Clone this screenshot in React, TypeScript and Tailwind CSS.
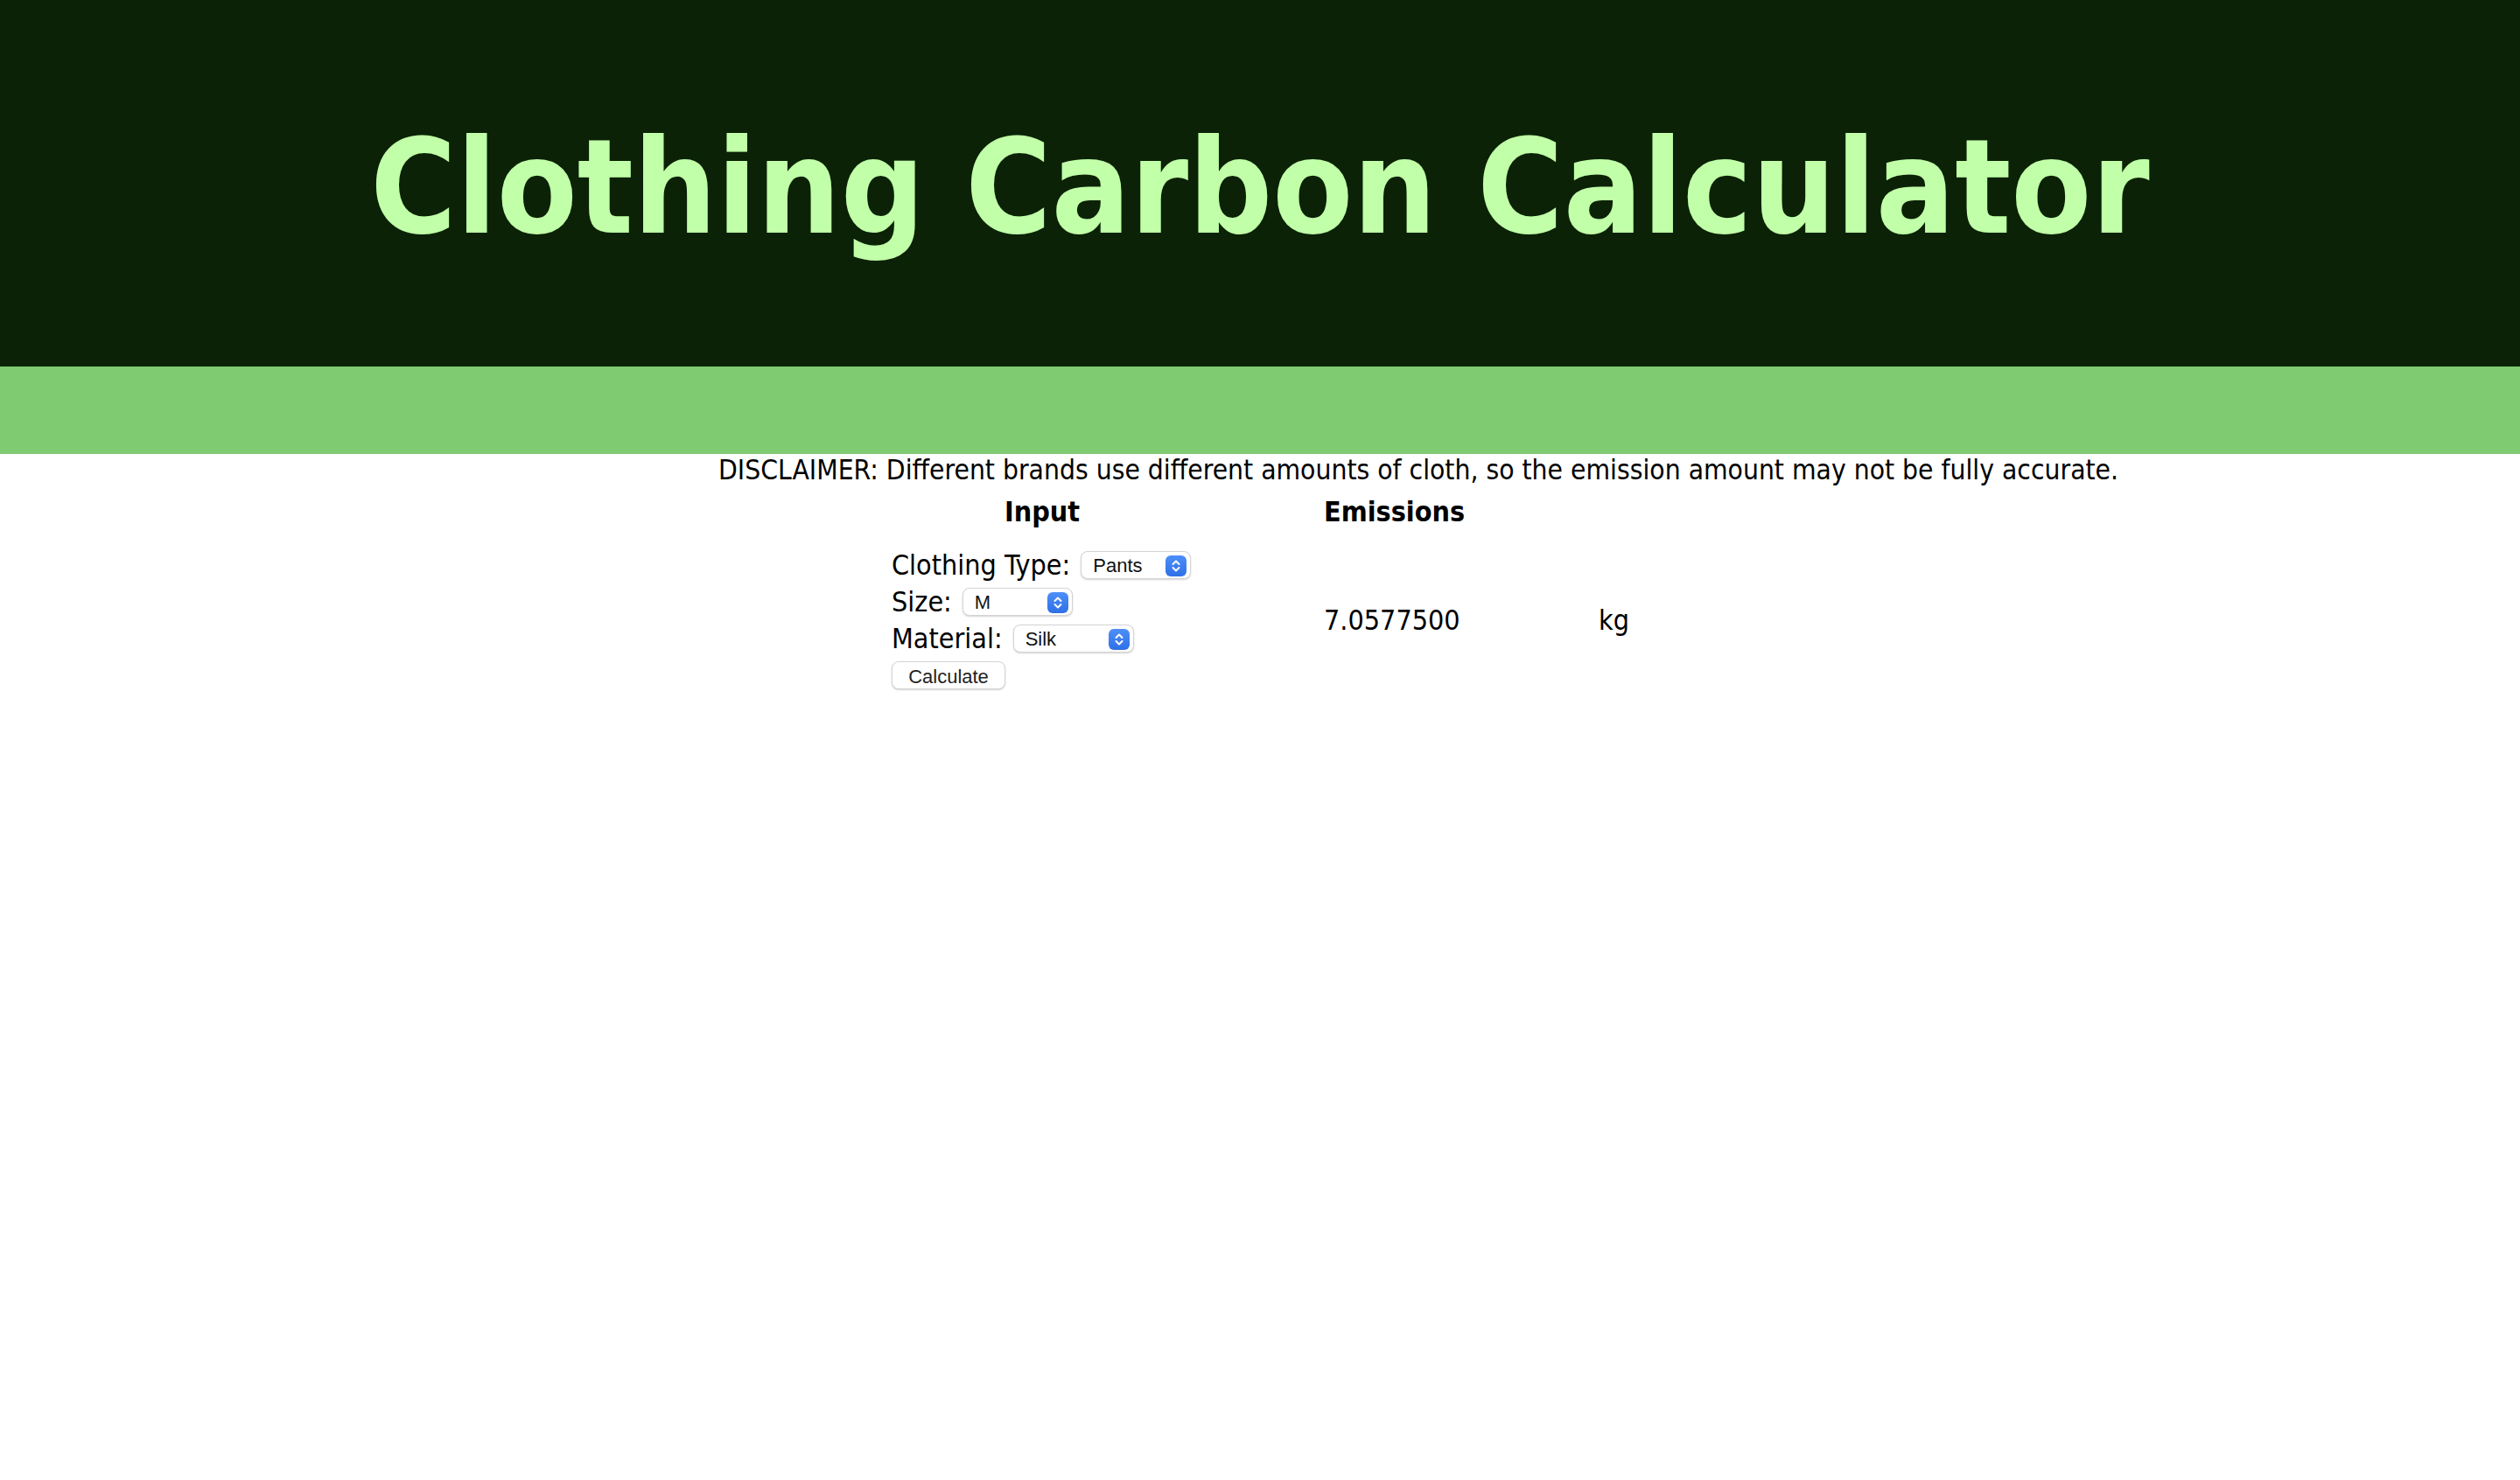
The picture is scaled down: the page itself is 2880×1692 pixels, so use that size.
import React from "react";

function Stepper() {
  return (
    <span className="absolute right-[4px] top-[4px] flex h-[24px] w-[24px] items-center justify-center rounded-[6px] bg-gradient-to-b from-[#4d8ff8] to-[#2f6fe8]">
      <svg width="14" height="18" viewBox="0 0 14 18" fill="none">
        <path d="M3.5 7 L7 3.5 L10.5 7" stroke="white" strokeWidth="2" strokeLinecap="round" strokeLinejoin="round" />
        <path d="M3.5 11 L7 14.5 L10.5 11" stroke="white" strokeWidth="2" strokeLinecap="round" strokeLinejoin="round" />
      </svg>
    </span>
  );
}

function FakeSelect({ value, width }: { value: string; width: string }) {
  return (
    <div className={`relative h-[32px] ${width} rounded-[8px] border border-[#d4d4d4] bg-white shadow-[0_1px_2px_rgba(0,0,0,0.18)]`}>
      <span className="absolute left-[13px] top-0 flex h-full items-center font-['Liberation_Sans',sans-serif] text-[22px] text-[#111]">
        {value}
      </span>
      <Stepper />
    </div>
  );
}

export default function App() {
  const ui = "font-['DejaVu_Sans_Condensed','DejaVu_Sans',sans-serif]";
  return (
    <div className={`min-h-[1692px] w-full bg-white text-black ${ui}`}>
      <header className="flex h-[419px] items-center justify-center bg-[#0b2206]">
        <h1 className="pt-[10px] text-[149px] font-bold leading-none text-[#c1ffa8]">
          Clothing Carbon Calculator
        </h1>
      </header>
      <div className="h-[100px] bg-[#7fcb71]" />
      <p className="ml-[821px] text-[31.5px] leading-[36px]">
        DISCLAIMER: Different brands use different amounts of cloth, so the emission amount may not be fully accurate.
      </p>
      <div className="ml-[1019px] mt-[10px] grid grid-cols-[494px_314px_auto]">
        <div className="w-[344px] text-center text-[32px] font-bold leading-[40px]">Input</div>
        <div className="text-[32px] font-bold leading-[40px]">Emissions</div>
        <div />
        <div className="mt-[25px] flex flex-col gap-[10px]">
          <div className="flex h-[32px] items-center gap-[12px] text-[32px]">
            <span>Clothing Type:</span>
            <FakeSelect value="Pants" width="w-[126px]" />
          </div>
          <div className="flex h-[32px] items-center gap-[12px] text-[32px]">
            <span>Size:</span>
            <FakeSelect value="M" width="w-[126px]" />
          </div>
          <div className="flex h-[32px] items-center gap-[12px] text-[32px]">
            <span>Material:</span>
            <FakeSelect value="Silk" width="w-[138px]" />
          </div>
          <div className="flex h-[32px] items-center">
            <button className="h-[32px] w-[130px] rounded-[8px] border border-[#d4d4d4] bg-white font-['Liberation_Sans',sans-serif] text-[22px] text-[#222] shadow-[0_1px_2px_rgba(0,0,0,0.18)]">
              Calculate
            </button>
          </div>
        </div>
        <div className="mt-[25px] flex items-center text-[32px]">7.0577500</div>
        <div className="mt-[25px] flex items-center text-[32px]">kg</div>
      </div>
    </div>
  );
}
